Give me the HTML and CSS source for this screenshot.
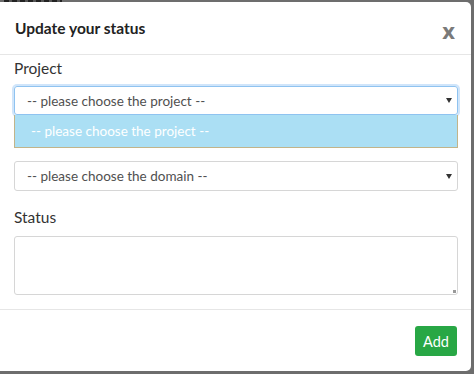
FILE: index.html
```html
<!DOCTYPE html>
<html lang="en">
<head>
    <meta charset="UTF-8">
    <title>Update your status</title>
    <link rel="stylesheet" href="styles.css">
</head>
<body>
    <div class="backdrop-strip"></div>
    <div class="modal">
        <div class="modal-header">
            <h5 class="modal-title">Update your status</h5>
            <span class="close">x</span>
        </div>

        <div class="modal-body">
            <label class="field-label">Project</label>
            <div class="select-wrap">
                <div class="select focused">
                    <span>-- please choose the project --</span>
                    <span class="caret"></span>
                </div>
                <div class="dropdown">
                    <div class="option selected">-- please choose the project --</div>
                </div>
            </div>

            <div class="select domain">
                <span>-- please choose the domain --</span>
                <span class="caret"></span>
            </div>

            <label class="field-label status-label">Status</label>
            <div class="textarea"><span class="grip"></span></div>
        </div>

        <div class="modal-footer">
            <button class="btn-add">Add</button>
        </div>
    </div>
</body>
</html>
```

FILE: styles.css
```css
body {
    margin: 0;
    background: #6d6d6d;
    font-family: Lato, "Open Sans", sans-serif;
    color: #212529;
    overflow: hidden;
}

.backdrop-strip {
    position: absolute;
    top: 0;
    left: 4px;
    width: 58px;
    height: 2px;
    background: repeating-linear-gradient(90deg, #222 0 5px, #555 5px 8px);
}

.modal {
    position: relative;
    width: 476px;
    margin: 2px 0 0 -5px;
    height: 369px;
    background: #fff;
    border-radius: 5px;
    box-sizing: border-box;
}

.modal-header {
    display: flex;
    align-items: center;
    justify-content: space-between;
    height: 52px;
    padding: 0 16px 0 20px;
    border-bottom: 1px solid #e6e6e6;
}

.modal-title {
    margin: 0;
    font-size: 15.5px;
    font-weight: 700;
    color: #222;
}

.close {
    font-family: "Open Sans", sans-serif;
    font-size: 22px;
    font-weight: 700;
    color: #7a7a7a;
    line-height: 1;
    margin-top: 3px;
}

.modal-body {
    padding: 2px 13px 14px 19px;
}

.field-label {
    display: block;
    font-size: 15.5px;
    line-height: 22px;
    color: #333;
    margin-bottom: 7px;
}

.status-label {
    margin-top: 15px;
    margin-bottom: 8px;
}

.select-wrap {
    position: relative;
}

.select {
    display: flex;
    align-items: center;
    justify-content: space-between;
    height: 30px;
    padding: 0 5px 0 12px;
    border: 1px solid #d6d6d6;
    border-radius: 3px;
    font-size: 13.5px;
    color: #505050;
    box-sizing: border-box;
}

.select.focused {
    height: 29px;
    border-color: #8fc3f0;
    box-shadow: 0 0 0 2px rgba(120, 180, 240, 0.35);
}

.caret {
    width: 0;
    height: 0;
    border-left: 3px solid transparent;
    border-right: 3px solid transparent;
    border-top: 5px solid #333;
}

.dropdown {
    position: absolute;
    top: 29px;
    left: 0;
    right: 0;
    height: 33px;
    background: #abdff4;
    border: 1px solid #c2b489;
    border-top: none;
    box-sizing: border-box;
}

.option {
    padding: 0 16px;
    line-height: 32px;
    font-size: 13.5px;
    color: #fff;
}

.domain {
    margin-top: 46px;
}

.textarea {
    position: relative;
    height: 59px;
    border: 1px solid #d6d6d6;
    border-radius: 3px;
    box-sizing: border-box;
}

.grip {
    position: absolute;
    right: 1px;
    bottom: 1px;
    width: 3px;
    height: 3px;
    background: #999;
}

.modal-footer {
    display: flex;
    justify-content: flex-end;
    padding: 16px 14px 16px;
    border-top: 1px solid #e6e6e6;
}

.btn-add {
    height: 30px;
    width: 42px;
    padding: 0;
    border: none;
    border-radius: 3px;
    background: #28a745;
    color: #fff;
    font-family: Lato, "Open Sans", sans-serif;
    font-size: 14.5px;
}
```
